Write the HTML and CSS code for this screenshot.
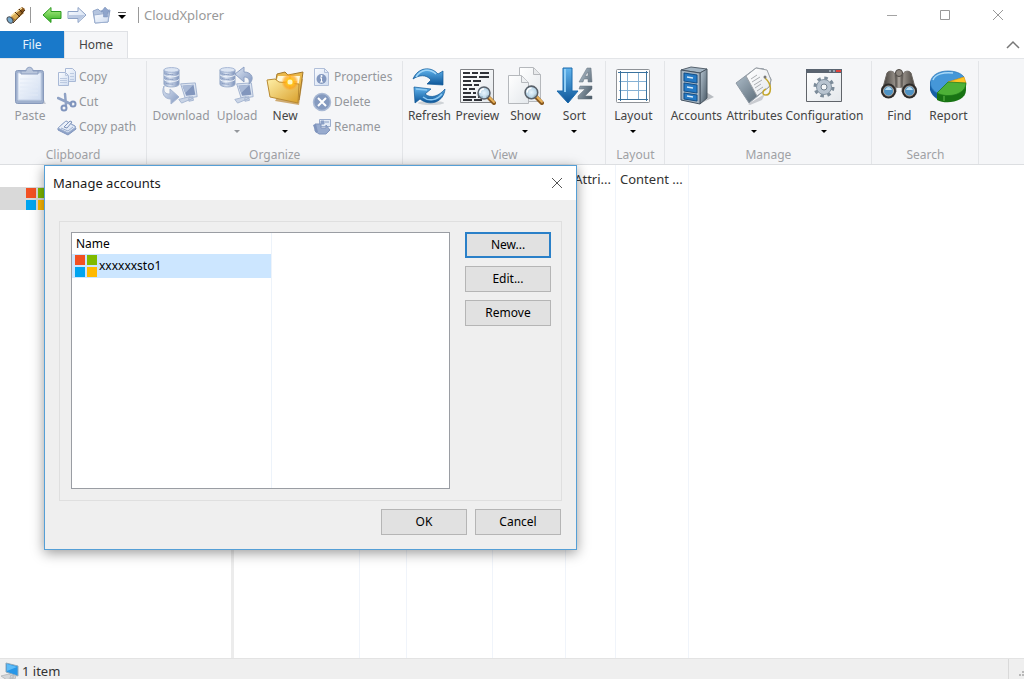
FILE: index.html
```html
<!DOCTYPE html>
<html lang="en">
<head>
    <meta charset="UTF-8">
    <meta name="viewport" content="width=device-width, initial-scale=1.0">
    <title>CloudXplorer</title>
    <link rel="stylesheet" href="styles.css">
</head>
<body>
    <!-- shared gradients and symbols -->
    <svg class="defs" width="0" height="0" aria-hidden="true">
        <defs>
            <linearGradient id="dim" x1="0" y1="0" x2="1" y2="1"><stop offset="0" stop-color="#dfe7f4"/><stop offset="1" stop-color="#8298c0"/></linearGradient>
            <linearGradient id="dimCyl" x1="0" y1="0" x2="1" y2="0"><stop offset="0" stop-color="#8ea2c6"/><stop offset=".4" stop-color="#dbe4f2"/><stop offset="1" stop-color="#7c91b9"/></linearGradient>
            <linearGradient id="paper" x1="0" y1="0" x2="1" y2="1"><stop offset="0" stop-color="#ffffff"/><stop offset="1" stop-color="#e4e8ec"/></linearGradient>
            <linearGradient id="dimPaper" x1="0" y1="0" x2="1" y2="1"><stop offset="0" stop-color="#fafcff"/><stop offset="1" stop-color="#cfdcf0"/></linearGradient>
            <linearGradient id="blue" x1="0" y1="0" x2="0" y2="1"><stop offset="0" stop-color="#62b5ee"/><stop offset="1" stop-color="#0c5598"/></linearGradient>
            <linearGradient id="gold" x1="0" y1="0" x2="1" y2="1"><stop offset="0" stop-color="#fff0a8"/><stop offset="1" stop-color="#d9a02c"/></linearGradient>
            <linearGradient id="green" x1="0" y1="0" x2="0" y2="1"><stop offset="0" stop-color="#b4f08c"/><stop offset="1" stop-color="#2fae1c"/></linearGradient>
            <linearGradient id="steel" x1="0" y1="0" x2="1" y2="1"><stop offset="0" stop-color="#b9c8d4"/><stop offset="1" stop-color="#465663"/></linearGradient>
            <linearGradient id="metal" x1="0" y1="0" x2="1" y2="0"><stop offset="0" stop-color="#37332f"/><stop offset=".5" stop-color="#b5aea6"/><stop offset="1" stop-color="#3a3632"/></linearGradient>
            <radialGradient id="spark"><stop offset="0" stop-color="#fffbd0"/><stop offset=".35" stop-color="#ffc91c"/><stop offset=".7" stop-color="#ff9a10" stop-opacity=".6"/><stop offset="1" stop-color="#ffb030" stop-opacity="0"/></radialGradient>
            <radialGradient id="lens"><stop offset="0" stop-color="#e8f6ff"/><stop offset="1" stop-color="#a3c8e0"/></radialGradient>
            <symbol id="windows" viewBox="0 0 22 22">
                <path fill="#f25022" d="M0 0h10v10H0z"/><path fill="#7fba00" d="M12 0h10v10H12z"/>
                <path fill="#00a4ef" d="M0 12h10v10H0z"/><path fill="#ffb900" d="M12 12h10v10H12z"/>
            </symbol>
            <symbol id="server" viewBox="0 0 18 22">
                <path d="M1 3v15c0 4 16 4 16 0V3z" fill="url(#dimCyl)" stroke="#9aacca"/>
                <ellipse cx="9" cy="3" rx="8" ry="2.5" fill="#dce5f3" stroke="#a3b4d2"/>
                <path d="M1 8c2 3 14 3 16 0M1 13c2 3 14 3 16 0" fill="none" stroke="#f0f4fa"/>
                <path d="M3 7c2 1 6 1 8 1M3 12c2 1 6 1 8 1M3 17c2 1 6 1 8 1" fill="none" stroke="#8598bd"/>
            </symbol>
            <symbol id="computer" viewBox="0 0 22 24">
                <path d="M3 2l16-1 2 15-13 2z" fill="#dbe3f0" stroke="#9fb0ce"/>
                <path d="M5 4l12-1 2 11-10 1z" fill="#8296bd"/>
                <path d="M5 4l12-1-9 9z" fill="#a9b9d6"/>
                <path d="M12 17l4-1 1 4-5 1zM1 19l12-3 3 2-12 5z" fill="#c9d4e6" stroke="#a3b4d0"/>
            </symbol>
            <symbol id="magnifier" viewBox="0 0 20 20">
                <path d="M12 12l6 6" stroke="#8a5a20" stroke-width="4" stroke-linecap="round"/>
                <path d="M13 12l5 5" stroke="#e8b25a" stroke-width="2" stroke-linecap="round"/>
                <circle cx="8" cy="8" r="6" fill="url(#lens)" fill-opacity=".85" stroke="#59616a" stroke-width="1.5"/>
                <path d="M4 8c0-3 2-4 4-4" fill="none" stroke="#fff" stroke-width="1.5"/>
            </symbol>
        </defs>
    </svg>

    <div class="app">
        <header class="titlebar">
            <svg class="app-icon" viewBox="0 0 20 20"><path d="M3 14l10-10 5 4L7 17z" fill="#a87830"/><path d="M5 11l4-4 5 4-4 4z" fill="#d9ac55"/><path d="M12 5l4-3 3 2-3 5z" fill="#86531a"/><path d="M5 11L16 3" stroke="#f9e2a4" stroke-width="1.500"/><path d="M9 7l5 5M13 4l4 4M7 18L19 5" stroke="#4a2b0c" fill="none"/><ellipse cx="4" cy="15" rx="2.500" ry="3.500" transform="rotate(-35 4 15)" fill="#78a9cc" stroke="#454a50"/></svg>
            <span class="bar"></span>
            <div class="quick">
                <button aria-label="Back"><svg width="20" height="18" viewBox="0 0 20 18"><path d="M1 9l8-7.500v4h10v7H9v4z" fill="url(#green)" stroke="#2c9a22" stroke-linejoin="round"/></svg></button>
                <button aria-label="Forward"><svg width="20" height="18" viewBox="0 0 20 18"><path d="M19 9l-8-7.500v4H1v7h10v4z" fill="url(#dimPaper)" stroke="#8da2c6" stroke-linejoin="round"/><path d="M2 9h16l-7 6v-3H2z" fill="#a9bbd9" opacity=".7"/></svg></button>
                <button aria-label="Up"><svg width="20" height="18" viewBox="0 0 20 18"><path d="M3 17L1 5l5-2 2 2 10-1-2 12z" fill="#b5c5df" stroke="#91a5c8"/><path d="M3 17L2 9l15-2-1 9z" fill="url(#dimPaper)" stroke="#9db0d0"/><path d="M13 1l5 5h-2.500v5h-4V6H9z" fill="#8fa5cc" stroke="#7b91b8" stroke-width=".5"/></svg></button>
                <button class="customize" aria-label="Customize toolbar"><svg width="10" height="8" viewBox="0 0 10 8"><path d="M1 1h8v1H1z" fill="#555"/><path d="M1 4h8L5 8z" fill="#000"/></svg></button>
            </div>
            <span class="bar"></span>
            <h1>CloudXplorer</h1>
            <div class="window-controls">
                <button aria-label="Minimize"><svg width="12" height="12"><path d="M1 6.500h10" stroke="#a3a3a3"/></svg></button>
                <button aria-label="Maximize"><svg width="12" height="12"><path d="M1.500 1.500h9v9h-9z" fill="none" stroke="#999"/></svg></button>
                <button aria-label="Close"><svg width="12" height="12"><path d="M1 1l10 10M11 1L1 11" stroke="#999"/></svg></button>
            </div>
        </header>

        <nav class="tabs">
            <button class="tab tab-file">File</button>
            <button class="tab tab-active">Home</button>
            <button class="collapse" aria-label="Collapse ribbon"><svg width="14" height="10"><path d="M1 8l6-6 6 6" fill="none" stroke="#777" stroke-width="1.500"/></svg></button>
        </nav>

        <div class="ribbon">
            <section class="group">
                <div class="tools">
                    <button class="tool edge" disabled>
                        <svg viewBox="0 0 40 40"><path d="M7 38h29l-3-6z" fill="#c9cdd5"/><rect x="5.500" y="4.500" width="28" height="33" rx="2" fill="#9fb0cd" stroke="#8799bb"/><path d="M8 7h23v27H8z" fill="url(#dimPaper)" stroke="#c4d1e6"/><path d="M10 13h18M10 17h18M10 21h18M10 25h18M10 29h18" stroke="#e2eaf6"/><path d="M11 8V5h5c0-5 7-5 7 0h5v3z" fill="#b9c6dc" stroke="#8b9dbf"/></svg>
                        <span>Paste</span>
                    </button>
                    <div class="tool-list">
                        <button class="small-tool" disabled><svg viewBox="0 0 20 20"><path d="M8.500 1.500h7l3 3v10h-10z" fill="url(#dimPaper)" stroke="#a9b9d6"/><path d="M1.500 5.500h7l3 3v10h-10z" fill="url(#dimPaper)" stroke="#a9b9d6"/><path d="M8.500 5.500v3h3M3 11.500h7M3 13.500h7M3 15.500h7M13 6.500h4M13 9.500h4M13 12.500h4" fill="none" stroke="#bccae1"/></svg>Copy</button>
                        <button class="small-tool" disabled><svg viewBox="0 0 20 20"><path d="M1 6l13 6M8 2l1 11" stroke="#8fa2c5" stroke-width="2.500" stroke-linecap="round"/><circle cx="7" cy="16" r="2.500" fill="none" stroke="#7f94bd" stroke-width="2"/><circle cx="16" cy="12" r="2.500" fill="none" stroke="#7f94bd" stroke-width="2"/></svg>Cut</button>
                        <button class="small-tool" disabled><svg viewBox="0 0 20 20"><path d="M1 11l8-7 9 5 1 3-8 6-10-5z" fill="#8fa3c7" stroke="#8196bf"/><path d="M1 11l8-7 10 6-8 6z" fill="url(#dimPaper)" stroke="#9aadce"/><path d="M7 10l6-6 2 1-5 6z" fill="#e9effa" stroke="#7f94ba"/><path d="M4 11l7 3M11 14l5-4" stroke="#9aadce"/></svg>Copy path</button>
                    </div>
                </div>
                <h2>Clipboard</h2>
            </section>

            <section class="group">
                <div class="tools">
                    <button class="tool wide" disabled>
                        <svg viewBox="0 0 40 40"><use href="#server" x="2" y="1" width="17" height="21"/><use href="#computer" x="16" y="16" width="22" height="22"/><path d="M3 20c-1 7 2 8 6 8v-5l9 8-8 7v-5C3 33 0 27 3 20z" fill="url(#dim)" stroke="#a5b5d1"/></svg>
                        <span>Download</span>
                    </button>
                    <button class="tool" disabled>
                        <svg viewBox="0 0 40 40"><use href="#server" x="2" y="1" width="17" height="21"/><use href="#computer" x="16" y="16" width="22" height="22"/><path d="M32 18c1-5-1-7-5-7v5l-9-8 9-7v5c8 0 11 7 5 12z" fill="url(#dim)" stroke="#8ea1c4"/></svg>
                        <span>Upload</span><i class="arrow"></i>
                    </button>
                    <button class="tool">
                        <svg viewBox="0 0 40 40"><path d="M10 35l24 4 4-26-16 2z" fill="#b57a1b" opacity=".6"/><path d="M8 30l4-22 8-2 3 3 15-3-4 28z" fill="#eab94c" stroke="#a3782c"/><path d="M8 26l5-16 22 0-3 20z" fill="#fff8d9"/><path d="M2 14l8-1 4 3 20 2-1 19-28-6z" fill="url(#gold)" stroke="#b98a31"/><circle cx="25" cy="16" r="9" fill="url(#spark)"/><path d="M25 9v14M18 16h14" stroke="#ffad16"/><circle cx="25" cy="16" r="2.500" fill="#fff9c0"/></svg>
                        <span>New</span><i class="arrow"></i>
                    </button>
                    <div class="tool-list">
                        <button class="small-tool" disabled><svg viewBox="0 0 20 20"><path d="M2.500 1.500h10l4 4v13h-14z" fill="url(#dimPaper)" stroke="#b1bfd9"/><path d="M12.500 1.500v4h4" fill="none" stroke="#b1bfd9"/><circle cx="9.500" cy="12" r="5" fill="#8398bf"/><path d="M9.500 11v4M8 11h2M8 15h3" stroke="#fff"/><circle cx="9.500" cy="9" r="1" fill="#fff"/></svg>Properties</button>
                        <button class="small-tool" disabled><svg viewBox="0 0 20 20"><circle cx="10" cy="10" r="8.500" fill="#859abf" stroke="#a9b9d4" stroke-width="1.500"/><path d="M6 6l8 8M14 6l-8 8" stroke="#fff" stroke-width="2"/></svg>Delete</button>
                        <button class="small-tool" disabled><svg viewBox="0 0 20 20"><path d="M7.500 2.500h11v7h-11z" fill="#e1e9f5" stroke="#9aadce"/><path d="M9 4h3v3H9zM13 5h4" fill="#8a9fc5" stroke="#8a9fc5"/><path d="M3 7h6v4h5V8l4 5-4 4H7l-4-3z" fill="#98abce" stroke="#8095bd"/><path d="M1 8l3-1 2 8-2 1z" fill="#7f94bd"/></svg>Rename</button>
                    </div>
                </div>
                <h2>Organize</h2>
            </section>

            <section class="group">
                <div class="tools">
                    <button class="tool">
                        <svg viewBox="0 0 40 40"><ellipse cx="22" cy="37" rx="13" ry="2" fill="#cfd3d7"/><path d="M4 13C9 1 22 0 29 8l5-3v14l-16-1 4-4C17 8 10 9 4 13z" fill="url(#blue)" stroke="#0f5796" stroke-width=".7"/><path d="M7 11C12 3 21 2 27 8" fill="none" stroke="#9fd5f8" stroke-width="1.500"/><path d="M36 23c-1 13-15 18-25 10l-5 4-1-16 17 2-6 5c6 5 14 2 20-5z" fill="url(#blue)" stroke="#0f5796" stroke-width=".7"/><path d="M7 23l11 1M14 31c6 5 14 3 19-3" fill="none" stroke="#8cc9f2" stroke-width="1.500"/></svg>
                        <span>Refresh</span>
                    </button>
                    <button class="tool">
                        <svg viewBox="0 0 40 40"><path d="M3.500 3.500h33v33h-33z" fill="url(#paper)" stroke="#808286"/><path d="M6 7h7m2 0h6m2 0h9M6 11h14m2 0h10M6 15h8m2 0h8M6 19h9m2 0h5M6 23h4m2 0h6M6 27h8m2 0h3M6 31h13m2 0h5M6 34h9m2 0h8" stroke="#303238" stroke-width="2"/><use href="#magnifier" x="19" y="19" width="20" height="20"/></svg>
                        <span>Preview</span>
                    </button>
                    <button class="tool">
                        <svg viewBox="0 0 40 40"><path d="M14.500 1.500h14l7 7v27h-21z" fill="url(#paper)" stroke="#b5b8bc"/><path d="M28.500 2v6.500h7" fill="#e7e9eb" stroke="#b5b8bc"/><path d="M3.500 9.500h13l7 7v21h-20z" fill="url(#paper)" stroke="#b5b8bc"/><path d="M16.500 10v6.500h7" fill="#eef0f2" stroke="#b5b8bc"/><use href="#magnifier" x="18" y="18" width="21" height="21"/></svg>
                        <span>Show</span><i class="arrow"></i>
                    </button>
                    <button class="tool medium">
                        <svg viewBox="0 0 40 40"><path d="M9 2h9v23h6L14 37 3 25h6z" fill="url(#blue)" stroke="#1b6aad"/><path d="M11 3v23" stroke="#93cff5" stroke-width="2"/><path d="M25 16l8-14h4l1 14h-4v-3h-4l-1 3zm6-6h3V6zM26 20h12v3l-7 7h7v3H24v-3l7-7h-6z" fill="url(#steel)" stroke="#66737e" stroke-width=".5"/></svg>
                        <span>Sort</span><i class="arrow"></i>
                    </button>
                </div>
                <h2>View</h2>
            </section>

            <section class="group">
                <div class="tools">
                    <button class="tool medium">
                        <svg viewBox="0 0 40 40"><rect x="3.500" y="3.500" width="33" height="33" rx="1" fill="#fff" stroke="#8e9297"/><path d="M14.500 6v28M25.500 6v28M6 15.500h28M6 24.500h28" stroke="#86b1d4"/><path d="M7.500 5v30M33.500 5v30M5 6.500h30M5 33.500h30" stroke="#3a729e"/></svg>
                        <span>Layout</span><i class="arrow"></i>
                    </button>
                </div>
                <h2>Layout</h2>
            </section>

            <section class="group">
                <div class="tools">
                    <button class="tool large">
                        <svg viewBox="0 0 40 40"><path d="M23 38l15-7-8-5z" fill="#b8bcc1"/><path d="M5 4l10-3 16 2-7 4z" fill="#a5b6c4" stroke="#56626e"/><path d="M24 7l7-4v29l-7 6z" fill="url(#steel)" stroke="#4a5661"/><path d="M5 4l19 3v31L5 34z" fill="#a3b2bf" stroke="#445261"/><path d="M8 7l13 2v8L8 15zM8 17l13 2v8L8 25zM8 27l13 2v6L8 33z" fill="#2479c4" stroke="#134f88"/><path d="M11 11l6 1M11 21l6 1M11 30l6 1" stroke="#d3e8f7" stroke-width="1.500"/></svg>
                        <span>Accounts</span>
                    </button>
                    <button class="tool large">
                        <svg viewBox="0 0 40 40"><path d="M14 38l17-10-3 6-12 5z" fill="#c9cbd0"/><path d="M2 17L22 2l8 1 7 10-1 7-21 17z" fill="url(#steel)" stroke="#8d98a3"/><path d="M12 10L22 2l11 2 4 10-2 7-12 9z" fill="url(#paper)" stroke="#9a9fa5"/><path d="M17 13l6-4M18 16l8-5M20 19l8-5M21 22l6-4M23 25l6-4" stroke="#aaadb1"/><path d="M31 12c8 7 6 17 1 17s-3-5 0-6" fill="none" stroke="#c4a62b" stroke-width="1.500"/><circle cx="31" cy="11" r="1.500" fill="#777"/></svg>
                        <span>Attributes</span><i class="arrow"></i>
                    </button>
                    <button class="tool extra">
                        <svg viewBox="0 0 40 40"><path d="M2.500 3.500h35v32h-35z" fill="url(#paper)" stroke="#60646a"/><path d="M2 3h36v4H2z" fill="#5a6470"/><path d="M32 4h5v2h-5z" fill="#e0433c"/><path d="M25 4h2v2h-2zM29 4h2v2h-2z" fill="#9aa5b0"/><circle cx="20" cy="21" r="8.500" fill="none" stroke="#7b8b99" stroke-width="4" stroke-dasharray="3.300 3.376"/><circle cx="20" cy="21" r="7.500" fill="#b8c4d0" stroke="#8494a2"/><circle cx="20" cy="21" r="3" fill="#f5f7f8" stroke="#71808e"/></svg>
                        <span>Configuration</span><i class="arrow"></i>
                    </button>
                </div>
                <h2>Manage</h2>
            </section>

            <section class="group">
                <div class="tools">
                    <button class="tool medium">
                        <svg viewBox="0 0 40 40"><rect x="16" y="5" width="8" height="17" rx="3" fill="url(#metal)"/><circle cx="20" cy="7" r="3.500" fill="#8d8780" stroke="#4b4743"/><path d="M8 7c2-3 7-2 8 1l1 18-14-1zM32 7c-2-3-7-2-8 1l-1 18 14-1z" fill="url(#metal)" stroke="#6b6661"/><path d="M2 24c0-7 14-8 15 0v3H2zM38 24c0-7-14-8-15 0v3h15z" fill="#7b756f"/><circle cx="9.500" cy="25" r="7.500" fill="#2d2b2a"/><circle cx="30.500" cy="25" r="7.500" fill="#2d2b2a"/><circle cx="9.500" cy="25" r="5" fill="#4f93c4" stroke="#b8aea5"/><circle cx="30.500" cy="25" r="5" fill="#4f93c4" stroke="#b8aea5"/><path d="M6 24c2-4 5-4 7 0zM27 24c2-4 5-4 7 0z" fill="#b8ddf2"/></svg>
                        <span>Find</span>
                    </button>
                    <button class="tool">
                        <svg viewBox="0 0 40 40"><path d="M2 15v9c1 4 4 7 7 9l2-8z" fill="#1660a5"/><path d="M9 27v7c9 5 29 2 29-10v-8z" fill="#187414"/><path d="M20 16L9 27C-3 20 2 5 20 5c7 0 13 2 16 6z" fill="#4597d8" stroke="#2a74b4" stroke-width=".7"/><path d="M20 16l16-5 2 6z" fill="#ffc525" stroke="#d99a10" stroke-width=".7"/><path d="M20 16l18 1c0 11-17 16-29 10z" fill="#4db137" stroke="#1c7a18" stroke-width=".7"/><path d="M5 14c2-6 11-8 20-7" stroke="#a9d9f8" stroke-width="1.500" fill="none"/><path d="M16 30v5" stroke="#64be4f"/></svg>
                        <span>Report</span>
                    </button>
                </div>
                <h2>Search</h2>
            </section>
        </div>

        <main class="workspace">
            <aside class="tree">
                <div class="tree-item"><svg width="22" height="22"><use href="#windows"/></svg></div>
            </aside>
            <div class="file-list">
                <div class="column column-name"></div>
                <div class="column column-short"></div>
                <div class="column column-size"></div>
                <div class="column column-date"></div>
                <div class="column column-attributes">Attri...</div>
                <div class="column column-content">Content ...</div>
            </div>
        </main>

        <footer class="statusbar">
            <svg width="20" height="18" viewBox="0 0 20 18"><path d="M6 2l12 3v10L6 11z" fill="#2797e8" stroke="#8fa9bb"/><path d="M7 3l10 3-10 4z" fill="#5ebcf7"/><path d="M11 14l5 1-1 3-5-1zM1 15l8-2 5 3-7 3z" fill="#d3d6d9" stroke="#b9bdc1"/></svg>
            <span class="status-text">1 item</span>
            <svg class="grip" width="8" height="8"><path d="M6 0h2v2H6zM3 3h2v2H3zM6 3h2v2H6z" fill="#b9b9b9"/></svg>
        </footer>
    </div>

    <section class="dialog" role="dialog" aria-labelledby="dialog-title">
        <header class="dialog-title">
            <h2 id="dialog-title">Manage accounts</h2>
            <button aria-label="Close dialog"><svg width="12" height="12"><path d="M1 1l10 10M11 1L1 11" stroke="#555"/></svg></button>
        </header>
        <div class="dialog-body">
            <div class="panel">
                <div class="accounts">
                    <table>
                        <thead><tr><th>Name</th></tr></thead>
                        <tbody>
                            <tr class="selected"><td><div class="account"><svg width="22" height="22"><use href="#windows"/></svg>xxxxxxsto1</div></td></tr>
                            <tr class="filler"><td></td></tr>
                        </tbody>
                    </table>
                </div>
                <div class="panel-actions">
                    <button class="btn btn-default">New...</button>
                    <button class="btn">Edit...</button>
                    <button class="btn">Remove</button>
                </div>
            </div>
            <div class="dialog-actions">
                <button class="btn">OK</button>
                <button class="btn">Cancel</button>
            </div>
        </div>
    </section>
</body>
</html>
```
FILE: styles.css
```css
* {
    box-sizing: border-box;
}
body {
    margin: 0;
    font-family: "Noto Sans", "Open Sans", sans-serif;
    font-size: 13px;
    line-height: 20px;
    color: #444;
    background: #fff;
}
h1, h2 {
    margin: 0;
    font-size: 13px;
    font-weight: normal;
}
button {
    padding: 0;
    border: none;
    background: none;
    font: inherit;
    color: inherit;
    white-space: nowrap;
}
svg {
    display: block;
    flex: none;
}
.defs {
    position: absolute;
}
.app {
    display: flex;
    flex-direction: column;
    height: 100vh;
}

/* title bar */
.titlebar {
    display: flex;
    align-items: center;
    flex: none;
    height: 31px;
    padding: 0 0 2px 6px;
}
.titlebar h1 {
    margin-left: 5px;
    color: #999;
}
.app-icon {
    width: 20px;
    height: 20px;
    margin-right: 4px;
}
.bar {
    width: 1px;
    height: 16px;
    background: #999;
}
.quick {
    display: flex;
    align-items: center;
    gap: 5px;
    margin: 0 11px;
}
.window-controls {
    display: flex;
    margin-left: auto;
}
.window-controls button {
    display: flex;
    align-items: center;
    justify-content: center;
    width: 53px;
    height: 28px;
}

/* tabs */
.tabs {
    display: flex;
    flex: none;
    height: 27px;
    font-size: 12px;
}
.tab {
    width: 64px;
    border: 1px solid #dfe1e5;
    border-bottom: none;
    background: #f5f6f8;
}
.tab-file {
    border-color: #1979ca;
    background: #1979ca;
    color: #e8f3fc;
}
.collapse {
    margin-left: auto;
    padding-right: 4px;
}

/* ribbon */
.ribbon {
    display: flex;
    flex: none;
    height: 107px;
    padding-top: 2px;
    border-top: 1px solid #e3e5e8;
    border-bottom: 1px solid #dcdee1;
    background: #f5f6f8;
    font-size: 12px;
}
.group {
    display: flex;
    flex-direction: column;
    justify-content: space-between;
    padding: 0 6px 0 2px;
    border-right: 1px solid #e3e5e8;
}
.group h2 {
    padding-left: 4px;
    font-size: 12px;
    line-height: 18px;
    color: #9fa1a5;
    text-align: center;
}
.tools {
    display: flex;
    padding-top: 3px;
}
.tool {
    display: flex;
    flex-direction: column;
    align-items: center;
    justify-content: flex-start;
    width: 48px;
    padding-top: 2px;
}
.tool svg {
    width: 40px;
    height: 40px;
}
.medium {
    width: 50px;
}
.large {
    width: 58px;
}
.wide {
    width: 64px;
}
.extra {
    width: 82px;
}
.edge {
    margin-left: 4px;
}
.tool:disabled, .small-tool:disabled {
    color: #94979c;
}
.arrow {
    margin-top: 4px;
    border: 3px solid transparent;
    border-top-color: currentColor;
    border-bottom: none;
}
.tool:enabled .arrow {
    border-top-color: #000;
}
.tool-list {
    display: flex;
    flex-direction: column;
    padding: 0 4px 0 3px;
}
.small-tool {
    display: flex;
    align-items: center;
    gap: 2px;
    height: 25px;
}
.small-tool svg {
    width: 20px;
    height: 20px;
}

/* workspace */
.workspace {
    display: flex;
    flex: 1;
    min-height: 0;
    color: #333;
}
.tree {
    width: 234px;
    padding-top: 22px;
    border-right: 3px solid #ececec;
}
.tree-item {
    padding: 1px 0 0 26px;
    background: #d9d9d9;
}
.file-list {
    display: flex;
    flex: 1;
}
.column {
    padding: 4px 4px 0;
    border-right: 1px solid #f0f4fa;
    white-space: nowrap;
}
.column-name {
    width: 126px;
}
.column-short {
    width: 47px;
}
.column-size {
    width: 86px;
}
.column-date {
    width: 73px;
}
.column-attributes {
    width: 50px;
    text-align: right;
}
.column-content {
    width: 73px;
}

/* status bar */
.statusbar {
    display: flex;
    align-items: flex-end;
    flex: none;
    height: 21px;
    border-top: 1px solid #e3e3e3;
    background: #efefef;
    color: #333;
}
.status-text {
    flex: 1;
    padding: 4px 0 0 2px;
    border-right: 1px solid #d9d9d9;
    line-height: 16px;
}
.grip {
    margin-left: 7px;
}

/* dialog */
.dialog {
    position: absolute;
    top: 165px;
    left: 44px;
    width: 533px;
    border: 1px solid #559fd6;
    background: #efefef;
    box-shadow: 0 3px 12px rgba(0, 0, 0, 0.4);
    color: #1a1a1a;
}
.dialog-title {
    display: flex;
    align-items: center;
    justify-content: space-between;
    height: 34px;
    padding: 0 13px 0 8px;
    background: #fff;
}
.dialog-body {
    padding: 21px 14px 14px;
    font-size: 12px;
    color: #000;
}
.panel {
    display: flex;
    gap: 15px;
    padding: 10px 10px 11px 11px;
    border: 1px solid #dfdfdf;
}
.accounts {
    flex: 1;
    height: 257px;
    border: 1px solid #9a9da3;
    background: #fff;
}
table {
    width: 200px;
    height: 100%;
    border-collapse: collapse;
    border-right: 1px solid #edf3fa;
}
th, td {
    padding: 0;
    font-weight: normal;
    text-align: left;
}
th {
    height: 21px;
    padding-left: 4px;
}
.account {
    display: flex;
    align-items: center;
    gap: 2px;
    height: 24px;
    padding-left: 3px;
}
.selected {
    background: #cce6ff;
}
.filler {
    height: 100%;
}
.panel-actions {
    display: flex;
    flex-direction: column;
    gap: 8px;
}
.btn {
    width: 86px;
    height: 26px;
    border: 1px solid #b5b5b5;
    background: #e1e1e1;
}
.btn-default {
    border: 2px solid #2a80c8;
}
.dialog-actions {
    display: flex;
    justify-content: flex-end;
    gap: 8px;
    padding: 8px 1px 0 0;
}
```
